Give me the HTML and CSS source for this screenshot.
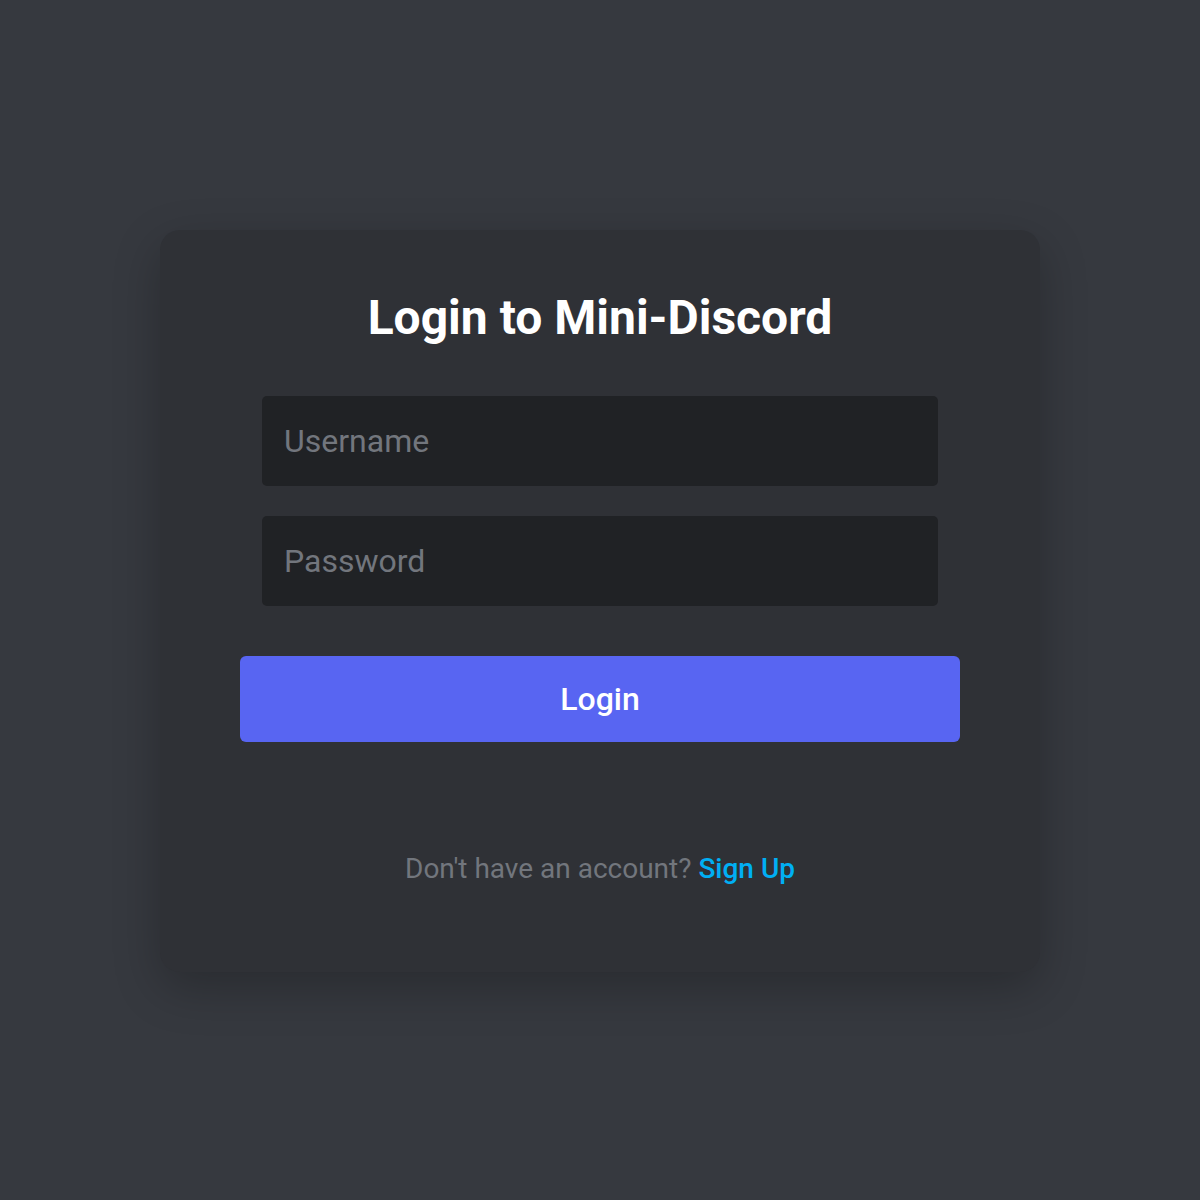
FILE: index.html
```html
<!DOCTYPE html>
<html lang="en">
<head>
<meta charset="utf-8">
<title>Login to Mini-Discord</title>
<link rel="stylesheet" href="styles.css">
</head>
<body>
<main class="page">
  <section class="card">
    <h1 class="title">Login to Mini-Discord</h1>
    <form class="form" onsubmit="return false">
      <input class="field" type="text" placeholder="Username">
      <input class="field" type="password" placeholder="Password">
      <button class="btn" type="submit">Login</button>
    </form>
    <p class="footer">Don't have an account? <a class="link" href="#">Sign Up</a></p>
  </section>
</main>
</body>
</html>
```

FILE: styles.css
```css
* { box-sizing: border-box; }
html, body { margin: 0; padding: 0; }
body {
  background: #36393f;
  font-family: Roboto, "Noto Sans", sans-serif;
  color: #dcddde;
}
.page {
  min-height: 1200px;
  display: flex;
  align-items: flex-start;
  justify-content: center;
  padding-top: 230px;
}
.card {
  width: 880px;
  background: #2f3136;
  border-radius: 20px;
  padding: 60px 80px 87px;
  box-shadow: 0 16px 48px rgba(0, 0, 0, 0.24);
  display: flex;
  flex-direction: column;
  align-items: stretch;
}
.title {
  margin: 0 0 51px;
  font-size: 48px;
  line-height: 55px;
  font-weight: 700;
  color: #ffffff;
  text-align: center;
}
.form {
  display: flex;
  flex-direction: column;
  gap: 30px;
}
.field {
  margin: 0 22px;
  height: 90px;
  border: none;
  outline: none;
  border-radius: 5px;
  background: #202225;
  padding: 0 22px;
  font-family: Roboto, "Noto Sans", sans-serif;
  font-size: 32px;
  color: #dcddde;
}
.field::placeholder { color: #72767d; }
.btn {
  margin-top: 20px;
  height: 86px;
  border: none;
  border-radius: 6px;
  background: #5865f2;
  color: #ffffff;
  font-family: Roboto, "Noto Sans", sans-serif;
  font-size: 32px;
  font-weight: 500;
  cursor: pointer;
}
.footer {
  margin: 110px 0 0;
  text-align: center;
  font-size: 28px;
  line-height: 33px;
  color: #72767d;
}
.link {
  color: #00aff4;
  font-weight: 500;
  text-decoration: none;
}
```
